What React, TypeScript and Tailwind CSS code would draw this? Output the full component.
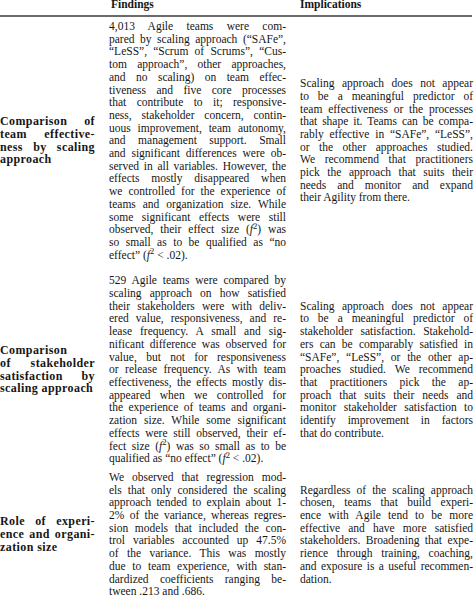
import React from 'react';

type Line = React.ReactNode;

const F2 = () => (
  <>
    <i>f</i>
    <sup>2</sup>
  </>
);

interface Row {
  label: Line[];
  findings: Line[];
  implications: Line[];
  gap: string;
}

const rows: Row[] = [
  {
    gap: 'mt-[3px]',
    label: ['Comparison of', 'team effective-', 'ness by scaling', 'approach'],
    findings: [
      '4,013 Agile teams were com-',
      'pared by scaling approach (“SAFe”,',
      '“LeSS”, “Scrum of Scrums”, “Cus-',
      'tom approach”, other approaches,',
      'and no scaling) on team effec-',
      'tiveness and five core processes',
      'that contribute to it; responsive-',
      'ness, stakeholder concern, contin-',
      'uous improvement, team autonomy,',
      'and management support. Small',
      'and significant differences were ob-',
      'served in all variables. However, the',
      'effects mostly disappeared when',
      'we controlled for the experience of',
      'teams and organization size. While',
      'some significant effects were still',
      <>observed, their effect size (<F2 />) was</>,
      'so small as to be qualified as “no',
      <>effect” (<F2 /> &lt; .02).</>,
    ],
    implications: [
      'Scaling approach does not appear',
      'to be a meaningful predictor of',
      'team effectiveness or the processes',
      'that shape it. Teams can be compa-',
      'rably effective in “SAFe”, “LeSS”,',
      'or the other approaches studied.',
      'We recommend that practitioners',
      'pick the approach that suits their',
      'needs and monitor and expand',
      'their Agility from there.',
    ],
  },
  {
    gap: 'mt-[13px]',
    label: ['Comparison', 'of stakeholder', 'satisfaction by', 'scaling approach'],
    findings: [
      '529 Agile teams were compared by',
      'scaling approach on how satisfied',
      'their stakeholders were with deliv-',
      'ered value, responsiveness, and re-',
      'lease frequency. A small and sig-',
      'nificant difference was observed for',
      'value, but not for responsiveness',
      'or release frequency. As with team',
      'effectiveness, the effects mostly dis-',
      'appeared when we controlled for',
      'the experience of teams and organi-',
      'zation size. While some significant',
      'effects were still observed, their ef-',
      <>fect size (<F2 />) was so small as to be</>,
      <>qualified as “no effect” (<F2 /> &lt; .02).</>,
    ],
    implications: [
      'Scaling approach does not appear',
      'to be a meaningful predictor of',
      'stakeholder satisfaction. Stakehold-',
      'ers can be comparably satisfied in',
      '“SAFe”, “LeSS”, or the other ap-',
      'proaches studied. We recommend',
      'that practitioners pick the ap-',
      'proach that suits their needs and',
      'monitor stakeholder satisfaction to',
      'identify improvement in factors',
      'that do contribute.',
    ],
  },
  {
    gap: 'mt-[6px]',
    label: ['Role of experi-', 'ence and organi-', 'zation size'],
    findings: [
      'We observed that regression mod-',
      'els that only considered the scaling',
      'approach tended to explain about 1-',
      '2% of the variance, whereas regres-',
      'sion models that included the con-',
      'trol variables accounted up 47.5%',
      'of the variance. This was mostly',
      'due to team experience, with stan-',
      'dardized coefficients ranging be-',
      'tween .213 and .686.',
    ],
    implications: [
      'Regardless of the scaling approach',
      'chosen, teams that build experi-',
      'ence with Agile tend to be more',
      'effective and have more satisfied',
      'stakeholders. Broadening that expe-',
      'rience through training, coaching,',
      'and exposure is a useful recommen-',
      'dation.',
    ],
  },
];

// each line is set on its own, justified except the last one of a paragraph
const Para = ({ lines, className = '' }: { lines: Line[]; className?: string }) => (
  <div className={className}>
    {lines.map((line, i) => (
      <div
        key={i}
        className={
          i < lines.length - 1 ? 'text-justify [text-align-last:justify]' : 'text-left'
        }
      >
        {line}
      </div>
    ))}
  </div>
);

const App: React.FC = () => {
  return (
    <div className="h-[613px] w-[474px] overflow-hidden bg-white font-['Liberation_Serif',serif] text-[11.5px] leading-[12.7px] text-[#161616]">
      {/* Header */}
      <div className="grid h-[15px] grid-cols-[95px_177px_173px] gap-x-[14px] font-bold">
        <div />
        <div className="-mt-[2px] pl-[2px]">Findings</div>
        <div className="-mt-[2px]">Implications</div>
      </div>
      <div className="h-[2px] w-[472px] bg-[#6b6b6b]" />

      {/* Rows */}
      {rows.map((row, idx) => (
        <div
          key={idx}
          className={`grid grid-cols-[95px_177px_173px] items-center gap-x-[14px] ${row.gap}`}
        >
          <Para lines={row.label} className="text-[12px] font-bold tracking-[0.4px]" />
          <Para lines={row.findings} />
          <Para lines={row.implications} />
        </div>
      ))}
    </div>
  );
};

export default App;
